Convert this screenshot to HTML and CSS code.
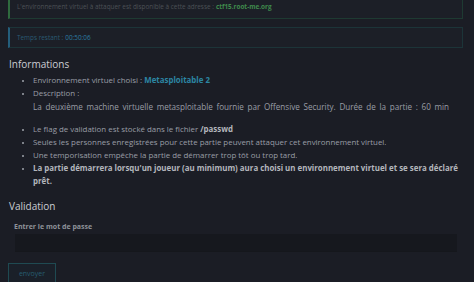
FILE: index.html
```html
<!DOCTYPE html>
<html lang="fr">
<head>
<meta charset="utf-8">
<link rel="stylesheet" href="styles.css">
</head>
<body>
<div class="page">
  <div class="alert alert-success">L'environnement virtuel à attaquer est disponible à cette adresse : <b>ctf15.root-me.org</b></div>
  <div class="alert alert-info">Temps restant : <b>00:50:06</b></div>

  <h3 class="title">Informations</h3>
  <ul class="list">
    <li>Environnement virtuel choisi : <b class="link">Metasploitable 2</b></li>
    <li>Description :<br><span class="desc">La deuxième machine virtuelle metasploitable fournie par Offensive Security. Durée de la partie : 60 min</span></li>
  </ul>
  <ul class="list list2">
    <li>Le flag de validation est stocké dans le fichier <b>/passwd</b></li>
    <li>Seules les personnes enregistrées pour cette partie peuvent attaquer cet environnement virtuel.</li>
    <li>Une temporisation empêche la partie de démarrer trop tôt ou trop tard.</li>
    <li><b>La partie démarrera lorsqu'un joueur (au minimum) aura choisi un environnement virtuel et se sera déclaré prêt.</b></li>
  </ul>

  <h3 class="title title-val">Validation</h3>
  <form class="form">
    <label class="label">Entrer le mot de passe</label>
    <div class="input"></div>
    <div class="btn">envoyer</div>
  </form>
</div>
</body>
</html>
```

FILE: styles.css
```css
html, body {
  margin: 0;
  padding: 0;
  background: #1b1d25;
}
body {
  font-family: "Open Sans", "DejaVu Sans", sans-serif;
  color: #9a9ea6;
  width: 474px;
  height: 282px;
  overflow: hidden;
}
.page {
  padding: 0 11px 0 8px;
}
.alert {
  font-size: 6.4px;
  border: 1px solid #1f2c2c;
  border-left: 2px solid #2f5a3a;
  background: #1c1f27;
  padding: 0 8px 0 7px;
  display: flex;
  align-items: center;
}
.alert b { margin-left: 2px; }
.alert-success {
  height: 24px;
  margin-top: -7px;
  color: #4c5156;
  border-color: #1e3a32;
  border-left-color: #2f6a3e;
}
.alert-success b { color: #3f8a4c; }
.alert-info {
  margin-top: 8px;
  height: 19px;
  color: #2a5a72;
  border-color: #1c3438;
  border-left-color: #245e7c;
}
.alert-info b { color: #2c7ca3; font-weight: normal; }
.title {
  font-weight: normal;
  font-size: 10px;
  color: #cbced3;
  margin: 8px 0 0 1px;
  line-height: 16px;
}
.list {
  margin: 2px 0 0 0;
  padding: 0 0 0 25px;
  font-size: 7.9px;
  line-height: 13px;
  list-style: square;
}
.list li::marker { color: #7d8189; font-size: 6px; }
.list b { color: #b3b6bc; }
.list .link { color: #2c86a3; }
.desc { font-size: 8.1px; word-spacing: 1.6px; white-space: nowrap; }
.list2 { margin-top: 9px; }
.title-val { margin-top: 10px; }
.form {
  margin: 8px 0 0 0;
}
.label {
  display: block;
  font-size: 7px;
  font-weight: bold;
  color: #8e9299;
  margin-left: 6px;
  line-height: 10px;
}
.input {
  margin: 2px 0 0 7px;
  width: 442px;
  height: 17px;
  background: #16181e;
  border-bottom: 1px solid #15171c;
}
.btn {
  margin-top: 11px;
  width: 48px;
  height: 21px;
  border: 1px solid #1f4a52;
  background: #1a2029;
  color: #275d70;
  font-size: 7px;
  display: flex;
  align-items: center;
  justify-content: center;
  box-sizing: border-box;
}
```
